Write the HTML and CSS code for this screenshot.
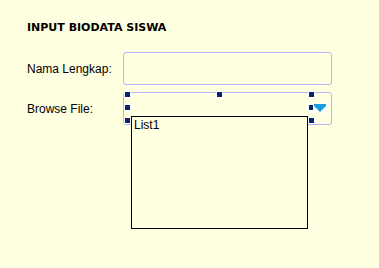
FILE: index.html
```html
<!DOCTYPE html>
<html>
<head>
<meta charset="utf-8">
<link rel="stylesheet" href="styles.css">
</head>
<body>
<div class="page">
  <h1 class="title">INPUT BIODATA SISWA</h1>
  <div class="form">
    <label class="label">Nama Lengkap:</label>
    <div class="field"></div>
    <label class="label">Browse File:</label>
    <div class="field combo">
      <span class="handle h-tl"></span>
      <span class="handle h-tm"></span>
      <span class="handle h-tr"></span>
      <span class="handle h-ml"></span>
      <span class="handle h-mr"></span>
      <span class="handle h-bl"></span>
      <span class="handle h-bm"></span>
      <span class="handle h-br"></span>
      <svg class="arrow" width="14" height="10" viewBox="0 0 14 10">
        <rect x="0" y="0" width="14" height="10" fill="#ffffff"/>
        <polygon points="1,1 13,1 13,3 7,9 1,3" fill="#1a9be0"/>
      </svg>
      <div class="list">List1</div>
    </div>
  </div>
</div>
</body>
</html>
```
FILE: styles.css
```css
html, body {
  margin: 0;
  padding: 0;
  background: #ffffe1;
}
.page {
  width: 379px;
  height: 268px;
  box-sizing: border-box;
  padding: 21px 0 0 27px;
  font-family: "Liberation Sans", Arial, sans-serif;
  color: #000;
}
.title {
  margin: 0;
  font-family: "DejaVu Sans", sans-serif;
  font-weight: bold;
  font-size: 11px;
  line-height: 14px;
}
.form {
  margin-top: 17px;
  display: grid;
  grid-template-columns: 96px 209px;
  row-gap: 7px;
  align-items: center;
}
.label {
  font-size: 12px;
  line-height: 14px;
}
.field {
  height: 33px;
  box-sizing: border-box;
  border: 1px solid #b4b4fa;
  border-radius: 3px;
}
.combo {
  position: relative;
}
.handle {
  position: absolute;
  width: 5px;
  height: 5px;
  background: #0a246a;
  box-shadow: 0 0 0 1px #ffffff;
}
.h-tl { left: 1px; top: -1px; }
.h-tm { left: 93px; top: -1px; }
.h-tr { left: 185px; top: -1px; }
.h-ml { left: 1px; top: 12px; }
.h-mr { left: 185px; top: 12px; }
.h-bl { left: 1px; top: 25px; }
.h-bm { left: 93px; top: 25px; }
.h-br { left: 185px; top: 25px; }
.arrow {
  position: absolute;
  left: 189px;
  top: 10px;
}
.list {
  position: absolute;
  left: 7px;
  top: 23px;
  width: 177px;
  height: 113px;
  box-sizing: border-box;
  border: 1px solid #000;
  background: #ffffe1;
  padding: 1px 0 0 2px;
  font-size: 12px;
  line-height: 14px;
}
```
